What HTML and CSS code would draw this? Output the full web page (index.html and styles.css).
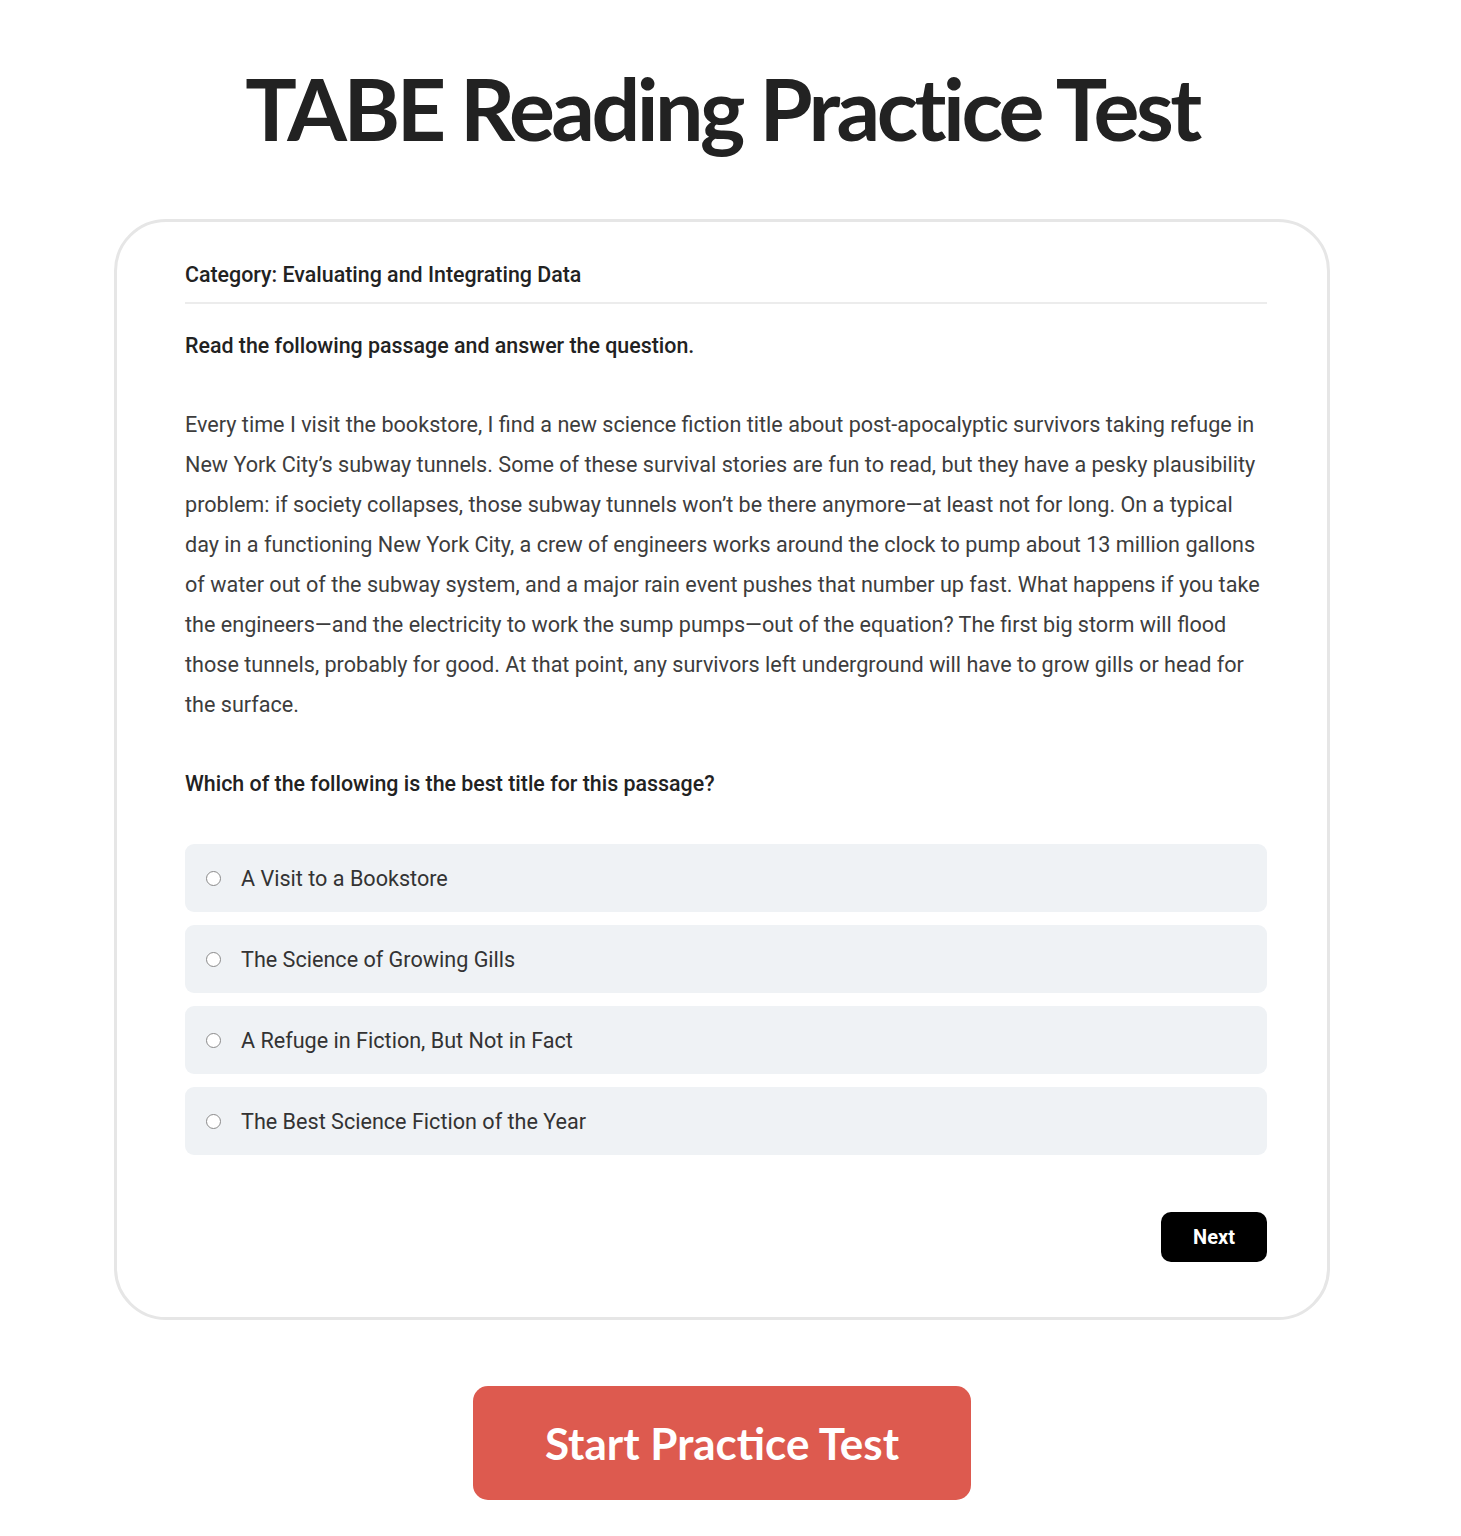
FILE: index.html
```html
<!DOCTYPE html>
<html lang="en">
<head>
<meta charset="utf-8">
<title>TABE Reading Practice Test</title>
<link rel="stylesheet" href="styles.css">
</head>
<body>
<main class="page">
  <h1 class="title">TABE Reading Practice Test</h1>
  <section class="card">
    <div class="category">Category: Evaluating and Integrating Data</div>
    <p class="instruction">Read the following passage and answer the question.</p>
    <p class="passage">Every time I visit the bookstore, I find a new science fiction title about post-apocalyptic survivors taking refuge in New York City’s subway tunnels. Some of these survival stories are fun to read, but they have a pesky plausibility problem: if society collapses, those subway tunnels won’t be there anymore—at least not for long. On a typical day in a functioning New York City, a crew of engineers works around the clock to pump about 13 million gallons of water out of the subway system, and a major rain event pushes that number up fast. What happens if you take the engineers—and the electricity to work the sump pumps—out of the equation? The first big storm will flood those tunnels, probably for good. At that point, any survivors left underground will have to grow gills or head for the surface.</p>
    <p class="question">Which of the following is the best title for this passage?</p>
    <div class="options">
      <label class="option"><span class="radio"></span><span>A Visit to a Bookstore</span></label>
      <label class="option"><span class="radio"></span><span>The Science of Growing Gills</span></label>
      <label class="option"><span class="radio"></span><span>A Refuge in Fiction, But Not in Fact</span></label>
      <label class="option"><span class="radio"></span><span>The Best Science Fiction of the Year</span></label>
    </div>
    <div class="actions">
      <button class="next">Next</button>
    </div>
  </section>
  <div class="start-wrap">
    <button class="start">Start Practice Test</button>
  </div>
</main>
</body>
</html>
```

FILE: styles.css
```css
html, body {
  margin: 0;
  padding: 0;
  background: #ffffff;
}
body {
  font-family: Roboto, "Liberation Sans", sans-serif;
  color: #333;
}
.page {
  width: 1444px;
  display: flex;
  flex-direction: column;
  align-items: center;
}
.title {
  margin: 56px 0 0 0;
  font-family: Lato, "Open Sans", sans-serif;
  font-weight: 700;
  font-size: 86px;
  line-height: 104px;
  color: #222;
  letter-spacing: -3.5px;
}
.card {
  box-sizing: border-box;
  width: 1216px;
  margin-top: 59px;
  border: 3px solid #e6e6e6;
  border-radius: 52px;
  padding: 39px 60px 55px 68px;
}
.category {
  font-size: 21.4px;
  line-height: 28px;
  font-weight: 500;
  color: #222;
  padding-bottom: 13px;
  border-bottom: 2px solid #ececec;
}
.instruction {
  margin: 28px 0 0 0;
  font-size: 21.4px;
  line-height: 28px;
  font-weight: 500;
  color: #222;
}
.passage {
  margin: 45px 0 0 0;
  font-size: 21.6px;
  line-height: 40px;
  color: #3d3d3d;
}
.question {
  margin: 45px 0 0 0;
  font-size: 21.4px;
  line-height: 28px;
  font-weight: 500;
  color: #222;
}
.options {
  margin-top: 46px;
  display: flex;
  flex-direction: column;
  gap: 13px;
}
.option {
  display: flex;
  align-items: center;
  height: 68px;
  background: #eff2f5;
  border-radius: 9px;
  padding-left: 21px;
  font-size: 21.6px;
  color: #333;
}
.radio {
  box-sizing: border-box;
  width: 15px;
  height: 15px;
  border: 1.5px solid #8a8a8a;
  border-radius: 50%;
  background: #fff;
  margin-right: 20px;
  flex: none;
}
.actions {
  margin-top: 57px;
  display: flex;
  justify-content: flex-end;
}
.next {
  width: 106px;
  height: 50px;
  background: #000;
  color: #fff;
  border: none;
  border-radius: 10px;
  font-family: Roboto, "Liberation Sans", sans-serif;
  font-weight: 700;
  font-size: 20px;
}
.start-wrap {
  margin-top: 66px;
  margin-bottom: 30px;
}
.start {
  width: 498px;
  height: 114px;
  background: #dd5a4f;
  color: #fff;
  border: none;
  border-radius: 15px;
  font-family: Lato, "Open Sans", sans-serif;
  font-weight: 700;
  font-size: 44px;
}
```
